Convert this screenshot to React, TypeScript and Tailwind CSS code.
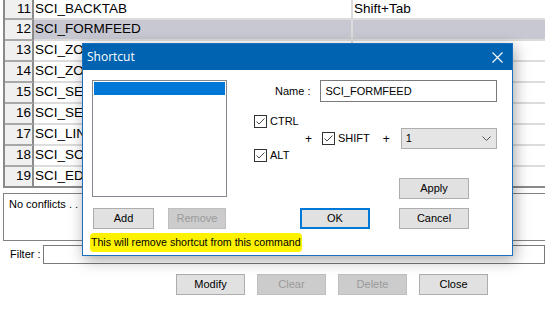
import React from 'react';

const rows = [
  { n: 11, name: 'SCI_BACKTAB', key: 'Shift+Tab' },
  { n: 12, name: 'SCI_FORMFEED', key: '' },
  { n: 13, name: 'SCI_ZOOMIN', key: '' },
  { n: 14, name: 'SCI_ZOOMOUT', key: '' },
  { n: 15, name: 'SCI_SETZOOM', key: '' },
  { n: 16, name: 'SCI_SELECTALL', key: '' },
  { n: 17, name: 'SCI_LINEDELETE', key: '' },
  { n: 18, name: 'SCI_SCROLLCARET', key: '' },
  { n: 19, name: 'SCI_EDITTOGGLEOVERTYPE', key: '' },
];

const Check: React.FC<{ label: string }> = ({ label }) => (
  <div className="flex items-center">
    <div className="w-[13px] h-[13px] border border-[#333333] bg-white flex items-center justify-center">
      <svg width="11" height="11" viewBox="0 0 11 11">
        <path d="M1.5 5.5 L4 8 L9.5 2.5" fill="none" stroke="#4a4a4a" strokeWidth="1" />
      </svg>
    </div>
    <span className="ml-[3px] text-[11px] leading-none text-black">{label}</span>
  </div>
);

const Btn: React.FC<{ label: string; w: string; disabled?: boolean; focus?: boolean; className?: string }> = ({ label, w, disabled, focus, className }) => (
  <div
    className={
      'h-[21px] flex items-center justify-center text-[11px] ' + w + ' ' +
      (disabled
        ? 'bg-[#cccccc] border border-[#bfbfbf] text-[#9a9a9a]'
        : focus
        ? 'bg-[#e1e1e1] border-2 border-[#0078d7] text-black'
        : 'bg-[#e1e1e1] border border-[#adadad] text-black') +
      ' ' + (className ?? '')
    }
  >
    {label}
  </div>
);

export default function App() {
  return (
    <div className="relative w-[545px] h-[310px] overflow-hidden bg-white" style={{ fontFamily: '"Liberation Sans", Arial, sans-serif' }}>
      {/* grid */}
      <div className="ml-[3px] w-[600px] border-l-2 border-[#8a8a8a]">
        {rows.map((r, i) => (
          <div key={r.n} className={'flex text-[13.5px] text-black ' + (i === 0 ? 'h-[20px]' : 'h-[21px]')}>
            <div className={'w-[29px] bg-[#f0f0f0] border-r-2 border-[#8a8a8a] border-b-2 text-right pr-[1px] flex items-center justify-end ' + (i === rows.length - 1 ? 'border-b-[#8a8a8a]' : 'border-b-[#a8a8a8]')}>
              {r.n}
            </div>
            <div className={'w-[319px] border-r-2 border-r-[#dcdcdc] border-b-2 flex items-center pl-[1px] ' + (r.n === 12 ? 'bg-[#c8c8d2] ' : '') + (i === rows.length - 1 ? 'border-b-[#8a8a8a]' : 'border-b-[#dcdcdc]')}>
              {r.name}
            </div>
            <div className={'flex-1 border-b-2 flex items-center pl-[1px] ' + (r.n === 12 ? 'bg-[#c8c8d2] ' : '') + (i === rows.length - 1 ? 'border-b-[#8a8a8a]' : 'border-b-[#dcdcdc]')}>
              {r.key}
            </div>
          </div>
        ))}
      </div>

      {/* conflicts */}
      <div className="mt-[5px] ml-[3px] w-[600px] h-[48px] border border-[#828282] pl-[5px] pt-[5px] text-[11px] text-black leading-none">
        No conflicts . . .
      </div>

      {/* filter */}
      <div className="mt-[4px] flex items-center">
        <span className="ml-[10px] w-[35px] text-[11px] text-black">Filter :</span>
        <div className="w-[540px] h-[19px] border border-[#7a7a7a] bg-white" />
      </div>

      {/* bottom buttons */}
      <div className="mt-[10px] ml-[176px] flex gap-[12px]">
        <Btn label="Modify" w="w-[69px]" />
        <Btn label="Clear" w="w-[69px]" disabled />
        <Btn label="Delete" w="w-[69px]" disabled />
        <Btn label="Close" w="w-[69px]" />
      </div>

      {/* dialog */}
      <div className="absolute left-[82px] top-[43px] w-[431px] h-[213px] bg-white border border-[#1b6fc0] shadow-[2px_4px_14px_rgba(0,0,0,0.35)] flex flex-col">
        <div className="h-[26px] bg-[#0063b1] flex items-center justify-between pl-[4px] pr-[9px]">
          <span className="text-[12px] text-white" style={{ fontFamily: '"Open Sans", "Liberation Sans", sans-serif' }}>Shortcut</span>
          <svg width="11" height="11" viewBox="0 0 11 11">
            <path d="M0.5 0.5 L10.5 10.5 M10.5 0.5 L0.5 10.5" stroke="#ffffff" strokeWidth="1.1" />
          </svg>
        </div>
        <div className="pl-[9px] pt-[10px] flex-1">
          <div className="flex h-[117px]">
            <div className="w-[135px] h-[117px] border border-[#828790] bg-white p-[1px]">
              <div className="h-[13px] bg-[#0078d7]" />
            </div>
            <div className="ml-[27px] flex flex-col">
              <div className="flex items-center h-[22px]">
                <span className="ml-[21px] text-[11px] text-black">Name :</span>
                <div className="ml-[10px] w-[177px] h-[22px] border border-[#7a7a7a] bg-white flex items-center pl-[4px] text-[11px] text-black">
                  SCI_FORMFEED
                </div>
              </div>
              <div className="mt-[13px] flex items-center">
                <div className="w-[51px] flex flex-col">
                  <Check label="CTRL" />
                  <div className="mt-[21px]">
                    <Check label="ALT" />
                  </div>
                </div>
                <span className="text-[12px] text-black leading-none">+</span>
                <div className="ml-[10px]">
                  <Check label="SHIFT" />
                </div>
                <span className="ml-[13px] text-[12px] text-black leading-none">+</span>
                <div className="ml-[11px] w-[96px] h-[21px] bg-[#e5e5e5] border border-[#adadad] flex items-center justify-between pl-[4px] pr-[5px] text-[11px] text-black">
                  <span>1</span>
                  <svg width="9" height="5" viewBox="0 0 9 5">
                    <path d="M0.5 0.5 L4.5 4.5 L8.5 0.5" fill="none" stroke="#555555" strokeWidth="1" />
                  </svg>
                </div>
              </div>
              <div className="mt-[16px] ml-[145px]">
                <Btn label="Apply" w="w-[70px]" />
              </div>
            </div>
          </div>
          <div className="mt-[11px] flex">
            <Btn label="Add" w="w-[61px]" className="ml-[1px]" />
            <Btn label="Remove" w="w-[58px]" disabled className="ml-[14px]" />
            <Btn label="OK" w="w-[70px]" focus className="ml-[74px]" />
            <Btn label="Cancel" w="w-[70px]" className="ml-[29px]" />
          </div>
          <div className="mt-[4px] -ml-[2px] inline-flex h-[19px] items-center px-[1px] bg-[#fff200] rounded-[4px] text-[10.6px] text-black">
            This will remove shortcut from this command
          </div>
        </div>
      </div>
    </div>
  );
}
